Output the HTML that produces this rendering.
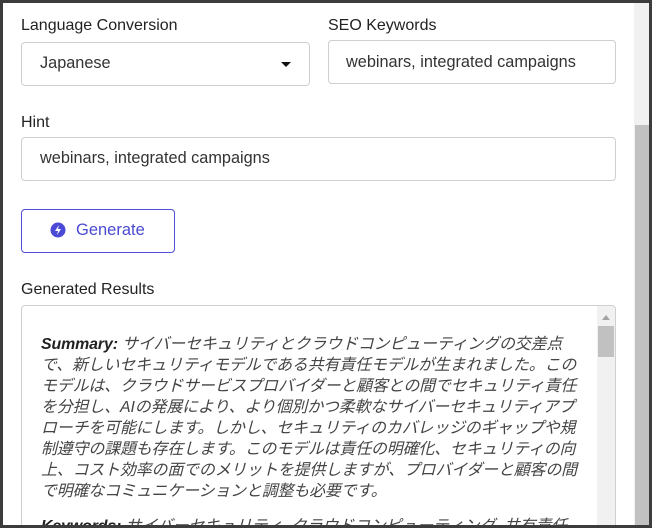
<!DOCTYPE html>
<html><head><meta charset="utf-8"><style>
*{box-sizing:border-box;margin:0;padding:0}
body{width:652px;height:528px;overflow:hidden;background:#3c3c3c;font-family:"Liberation Sans","Noto Sans CJK JP",sans-serif;position:relative}
.page{position:absolute;left:3px;top:3px;width:646px;height:522px;background:#fff;overflow:hidden}
.a{position:absolute}
.lbl{font-size:16px;color:#222;font-weight:500;white-space:nowrap}
.box{border:1px solid #cfcfcf;border-radius:4px;background:#fff}
.val{font-size:16.3px;color:#333;white-space:nowrap}
.res div{position:absolute;left:19px;white-space:nowrap;font-size:15.9px;font-style:italic;color:#444;letter-spacing:-0.1px}
.res b{color:#222;font-style:italic}
</style></head><body>
<div class="page">
<div class="a" style="left:631px;top:0;width:15px;height:522px;background:#f1f1f1"></div>
<div class="a" style="left:632px;top:122px;width:14px;height:400px;background:#c1c1c1"></div>

<div class="a lbl" style="left:18px;top:14px">Language Conversion</div>
<div class="a box" style="left:18px;top:39px;width:289px;height:44px"></div>
<div class="a val" style="left:37px;top:51px">Japanese</div>
<div class="a" style="left:278px;top:59px;width:0;height:0;border-left:5px solid transparent;border-right:5px solid transparent;border-top:5px solid #111"></div>

<div class="a lbl" style="left:325px;top:14px">SEO Keywords</div>
<div class="a box" style="left:325px;top:37px;width:288px;height:44px"></div>
<div class="a val" style="left:343px;top:50px">webinars, integrated campaigns</div>

<div class="a lbl" style="left:18px;top:111px">Hint</div>
<div class="a box" style="left:18px;top:134px;width:595px;height:44px"></div>
<div class="a val" style="left:37px;top:146px">webinars, integrated campaigns</div>

<div class="a" style="left:18px;top:206px;width:154px;height:44px;border:1px solid #4f4fd8;border-radius:4px"></div>
<svg class="a" style="left:47px;top:219px" width="16" height="16" viewBox="0 0 16 16"><circle cx="8" cy="8" r="7.5" fill="#4a4ad6"/><path d="M9 3 L5 9 H8 L7 13 L11 7 H8 Z" fill="#fff"/></svg>
<div class="a" style="left:73px;top:218px;font-size:16.5px;color:#4a4ad0">Generate</div>

<div class="a lbl" style="left:18px;top:278px">Generated Results</div>
<div class="a box res" style="left:18px;top:302px;width:595px;height:240px;overflow:hidden">
<div class="a" style="left:575px;top:0;width:18px;height:240px;background:#f1f1f1"></div>
<div class="a" style="left:580px;top:9px;width:0;height:0;border-left:4px solid transparent;border-right:4px solid transparent;border-bottom:5px solid #a3a3a3"></div>
<div class="a" style="left:576px;top:20px;width:16px;height:31px;background:#c1c1c1"></div>
<div style="top:25px"><b>Summary:</b> サイバーセキュリティとクラウドコンピューティングの交差点</div>
<div style="top:46px">で、新しいセキュリティモデルである共有責任モデルが生まれました。この</div>
<div style="top:67px">モデルは、クラウドサービスプロバイダーと顧客との間でセキュリティ責任</div>
<div style="top:88px">を分担し、AIの発展により、より個別かつ柔軟なサイバーセキュリティアプ</div>
<div style="top:109px">ローチを可能にします。しかし、セキュリティのカバレッジのギャップや規</div>
<div style="top:130px">制遵守の課題も存在します。このモデルは責任の明確化、セキュリティの向</div>
<div style="top:151px">上、コスト効率の面でのメリットを提供しますが、プロバイダーと顧客の間</div>
<div style="top:172px">で明確なコミュニケーションと調整も必要です。</div>
<div style="top:207px"><b>Keywords:</b> サイバーセキュリティ, クラウドコンピューティング, 共有責任</div>
</div>
</div>
</body></html>
